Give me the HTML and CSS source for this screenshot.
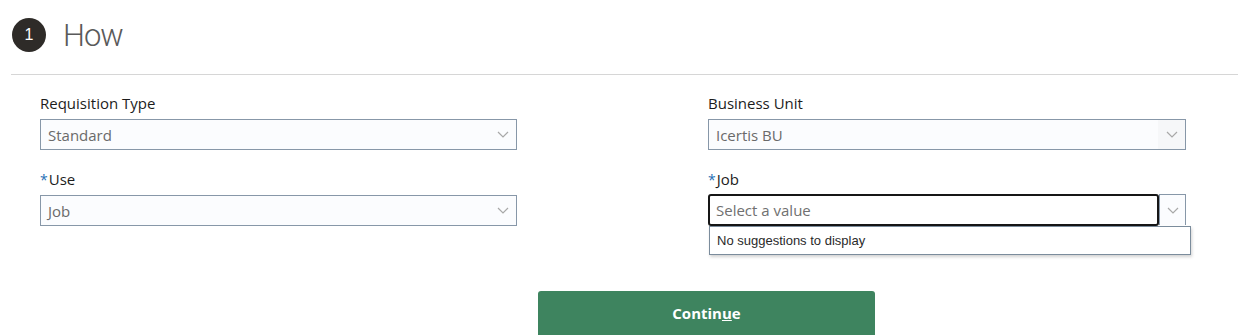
FILE: index.html
```html
<!DOCTYPE html>
<html>
<head>
<meta charset="utf-8">
<link rel="stylesheet" href="styles.css">
</head>
<body>
<div class="page">
  <div class="step-head">
    <div class="step-num">1</div>
    <div class="step-title">How</div>
  </div>
  <div class="rule"></div>
  <div class="form">
    <div class="field">
      <div class="label">Requisition Type</div>
      <div class="select"><span class="value">Standard</span><span class="chev"><svg width="12" height="7" viewBox="0 0 12 7"><path d="M1 1 L6 6 L11 1" fill="none" stroke="#a8a8a8" stroke-width="1.2"/></svg></span></div>
    </div>
    <div class="field">
      <div class="label">Business Unit</div>
      <div class="select"><span class="value">Icertis BU</span><span class="chev shaded"><svg width="12" height="7" viewBox="0 0 12 7"><path d="M1 1 L6 6 L11 1" fill="none" stroke="#a8a8a8" stroke-width="1.2"/></svg></span></div>
    </div>
    <div class="field">
      <div class="label"><span class="req">*</span>Use</div>
      <div class="select"><span class="value">Job</span><span class="chev"><svg width="12" height="7" viewBox="0 0 12 7"><path d="M1 1 L6 6 L11 1" fill="none" stroke="#a8a8a8" stroke-width="1.2"/></svg></span></div>
    </div>
    <div class="field">
      <div class="label"><span class="req">*</span>Job</div>
      <div class="combo">
        <div class="combo-input">Select a value</div>
        <div class="combo-btn"><svg width="12" height="7" viewBox="0 0 12 7"><path d="M1 1 L6 6 L11 1" fill="none" stroke="#a8a8a8" stroke-width="1.2"/></svg></div>
        <div class="suggest">No suggestions to display</div>
      </div>
    </div>
  </div>
  <div class="actions">
    <button class="continue">Contin<u>u</u>e</button>
  </div>
</div>
</body>
</html>
```
FILE: styles.css
```css
html, body {
  margin: 0;
  padding: 0;
  background: #ffffff;
  overflow: hidden;
}
body {
  font-family: "Open Sans", "Noto Sans", sans-serif;
  color: #1f1f1f;
}
.page {
  width: 1238px;
  height: 335px;
  padding-left: 11px;
  box-sizing: border-box;
}
.step-head {
  display: flex;
  align-items: center;
  height: 74px;
  padding-bottom: 4px;
  box-sizing: border-box;
}
.step-num {
  width: 34px;
  height: 34px;
  border-radius: 50%;
  background: #2e2b28;
  color: #ffffff;
  font-family: "Liberation Sans", sans-serif;
  font-size: 16px;
  display: flex;
  align-items: center;
  justify-content: center;
  margin-left: 1px;
}
.step-title {
  margin-left: 17px;
  font-family: Roboto, "Liberation Sans", sans-serif;
  font-weight: 300;
  font-size: 31px;
  letter-spacing: -1px;
  color: #5a5a5a;
}
.rule {
  height: 1px;
  background: #d6d6d6;
}
.form {
  display: grid;
  grid-template-columns: 477px 478px;
  column-gap: 191px;
  row-gap: 19px;
  padding-left: 29px;
  padding-top: 18px;
}
.label {
  font-size: 15px;
  line-height: 20px;
  height: 20px;
  color: #1c1c1c;
  margin-bottom: 6px;
}
.req {
  color: #1f6fb5;
  font-size: 14px;
  margin-right: 1px;
}
.select {
  height: 31px;
  box-sizing: border-box;
  border: 1px solid #8797a8;
  background: #fbfcfe;
  display: flex;
  align-items: center;
  justify-content: space-between;
  padding-left: 7px;
}
.value {
  font-size: 15px;
  color: #6a6a6a;
}
.chev {
  width: 27px;
  height: 29px;
  display: flex;
  align-items: center;
  justify-content: center;
}
.chev.shaded {
  background: #f6f7f9;
}
.combo {
  position: relative;
  display: flex;
  height: 32px;
  margin-top: -1px;
}
.combo-input {
  width: 451px;
  height: 32px;
  box-sizing: border-box;
  border: 2px solid #161616;
  border-radius: 3px;
  padding-left: 6px;
  font-size: 15px;
  color: #707070;
  display: flex;
  align-items: center;
}
.combo-btn {
  width: 27px;
  height: 31px;
  box-sizing: border-box;
  border: 1px solid #8797a8;
  border-bottom: none;
  background: #fbfcfe;
  display: flex;
  align-items: center;
  justify-content: center;
}
.suggest {
  position: absolute;
  top: 32px;
  left: 1px;
  width: 482px;
  height: 29px;
  box-sizing: border-box;
  border: 1px solid #7b8c9c;
  background: #ffffff;
  box-shadow: 1px 2px 3px rgba(0,0,0,0.18);
  font-family: "Liberation Sans", Arial, sans-serif;
  font-size: 13px;
  color: #2a2a2a;
  padding-left: 7px;
  display: flex;
  align-items: center;
}
.actions {
  display: flex;
  padding-top: 65px;
  padding-left: 527px;
}
.continue {
  width: 337px;
  height: 46px;
  border: none;
  border-radius: 3px;
  background: #3e845f;
  color: #ffffff;
  font-family: "Open Sans", "Noto Sans", sans-serif;
  font-weight: 700;
  font-size: 15px;
  padding: 0;
  padding-bottom: 2px;
}
```
